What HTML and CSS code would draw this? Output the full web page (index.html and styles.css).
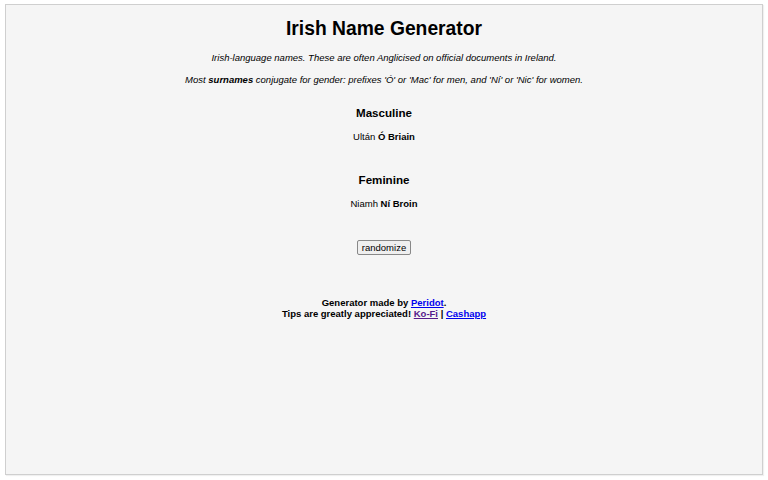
FILE: index.html
```html
<!DOCTYPE html>
<html lang="en">
<head>
    <meta charset="UTF-8">
    <meta name="viewport" content="width=device-width, initial-scale=1.0">
    <title>Irish Name Generator</title>
    <link rel="stylesheet" href="styles.css">
</head>
<body>
    <div class="frame">
        <h1>Irish Name Generator</h1>
        <p class="note">Irish-language names. These are often Anglicised on official documents in Ireland.</p>
        <p class="note">Most <b>surnames</b> conjugate for gender: prefixes 'Ó' or 'Mac' for men, and 'Ní' or 'Nic' for women.</p>

        <div class="group">
            <h3>Masculine</h3>
            <p class="name" id="masc">Ultán <b>Ó Briain</b></p>
        </div>

        <div class="group">
            <h3>Feminine</h3>
            <p class="name" id="fem">Niamh <b>Ní Broin</b></p>
        </div>

        <div class="controls">
            <button onclick="randomize()">randomize</button>
        </div>

        <div class="credits">
            Generator made by <a href="#">Peridot</a>.<br>
            Tips are greatly appreciated! <a href="#" class="visited">Ko-Fi</a> | <a href="#">Cashapp</a>
        </div>
    </div>

    <script>
        var mascFirst = ['Ultán', 'Cian', 'Oisín', 'Darragh', 'Tadhg', 'Ruairí'];
        var femFirst = ['Niamh', 'Aoife', 'Saoirse', 'Clodagh', 'Órla', 'Siobhán'];
        var surnames = ['Briain', 'Broin', 'Néill', 'Conaill', 'Dónaill', 'Súilleabháin'];

        function pick(list) {
            return list[Math.floor(Math.random() * list.length)];
        }

        function randomize() {
            document.getElementById('masc').innerHTML = pick(mascFirst) + ' <b>Ó ' + pick(surnames) + '</b>';
            document.getElementById('fem').innerHTML = pick(femFirst) + ' <b>Ní ' + pick(surnames) + '</b>';
        }
    </script>
</body>
</html>
```

FILE: styles.css
```css
body {
    font-family: "Liberation Sans", Arial, sans-serif;
    margin: 0;
    background-color: #fff;
    color: #000;
}

.frame {
    margin: 4px 5px;
    height: 471px;
    border: 1px solid #cfcfcf;
    background-color: #f5f5f5;
    box-shadow: 1px 1px 1px rgba(0, 0, 0, 0.06);
    text-align: center;
    box-sizing: border-box;
    padding-top: 12px;
}

h1 {
    font-size: 19.3px;
    margin: 0 0 11px 0;
    line-height: 23px;
}

.note {
    font-style: italic;
    font-size: 9.5px;
    line-height: 13px;
    margin: 0 0 9px 0;
}

.group {
    margin-top: 20px;
}

.group + .group {
    margin-top: 30px;
}

h3 {
    font-size: 11.6px;
    line-height: 14px;
    margin: 0 0 10px 0;
}

.name {
    font-size: 9.5px;
    line-height: 13px;
    margin: 0;
}

.controls {
    margin-top: 27px;
}

button {
    font-family: "Liberation Sans", Arial, sans-serif;
    font-size: 9.5px;
    padding: 1px 4px;
    background-color: #efefef;
    border: 1px solid #888;
    border-radius: 2px;
}

.credits {
    margin-top: 42px;
    font-size: 9.5px;
    font-weight: bold;
    line-height: 11px;
}

.credits a {
    color: #0000ee;
}

.credits a.visited {
    color: #551a8b;
}
```
